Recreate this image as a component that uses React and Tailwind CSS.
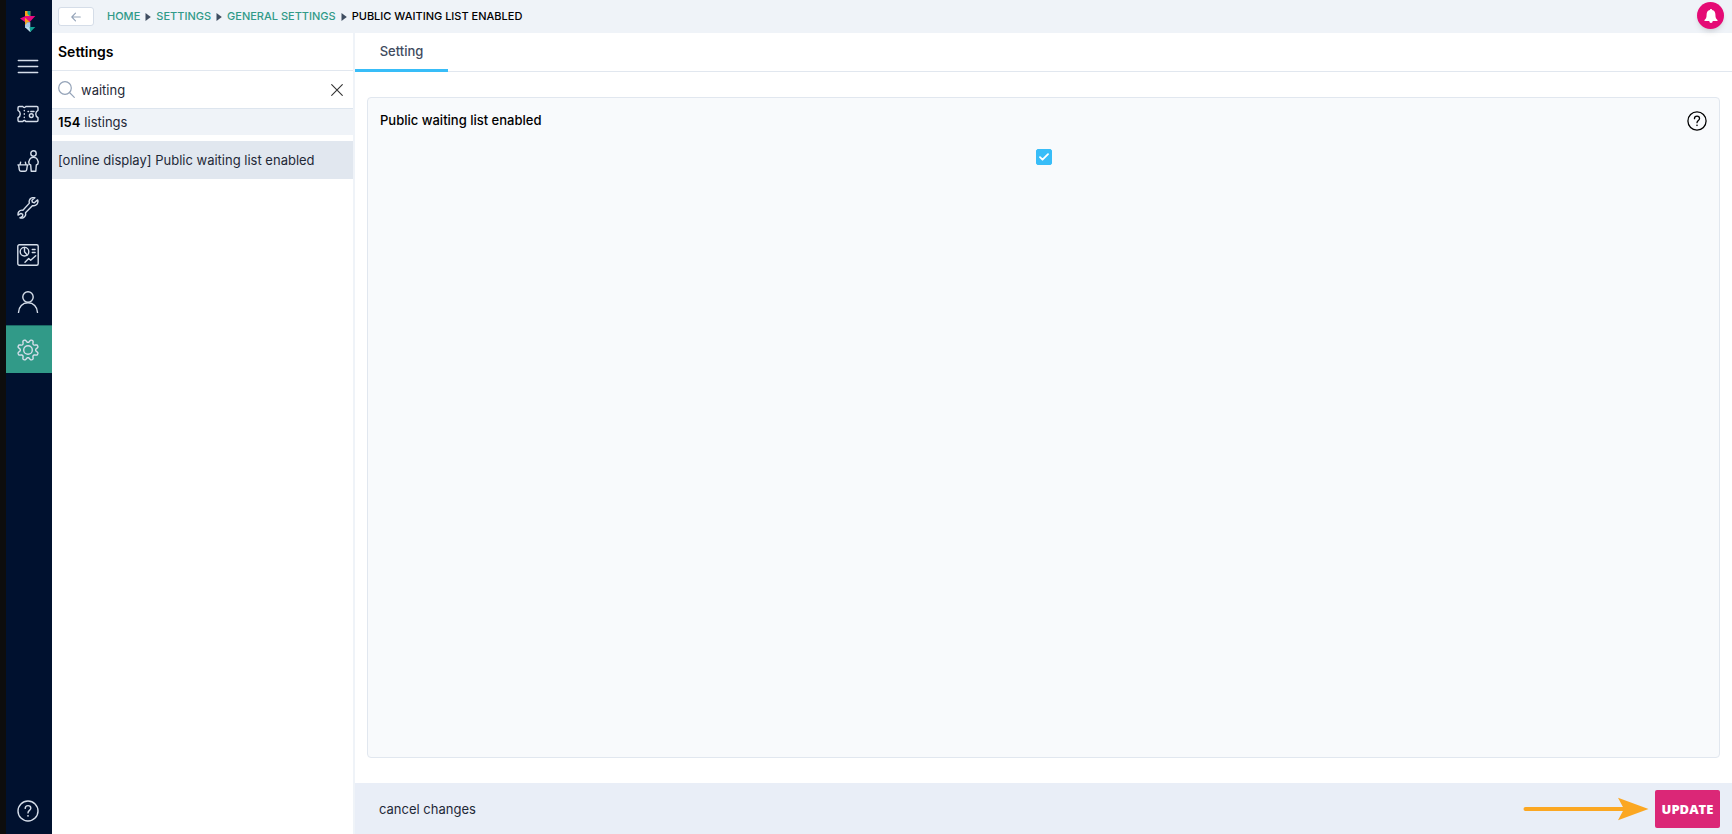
import { useState } from 'react'

const stroke = { fill: 'none', stroke: 'currentColor', strokeWidth: 1.4, strokeLinecap: 'round', strokeLinejoin: 'round' }

// Outline of an eight-toothed gear centred on (11, 11).
const gearOutline = Array.from({ length: 144 }, (_, i) => {
  const angle = (i / 144) * Math.PI * 2
  const radius = 9.1 - 1.5 * Math.tanh(1.7 * Math.cos(8 * angle))
  return `${(11 + radius * Math.cos(angle)).toFixed(2)},${(11 + radius * Math.sin(angle)).toFixed(2)}`
}).join(' ')

function Icon({ children }) {
  return (
    <svg viewBox="0 0 22 22" className="size-[22px]" aria-hidden="true" {...stroke}>
      {children}
    </svg>
  )
}

function Logo() {
  return (
    <svg viewBox="0 0 16 22" className="h-[22px] w-4" aria-hidden="true">
      <path d="M5 1h5.300v5.500H5z" fill="#f9a51a" />
      <path d="M10.300 1v5.500L7.500 4V1z" fill="#12a192" />
      <path d="M0 8.600L5.500 6H15.300L9.300 12.400 5 12z" fill="#e5097f" />
      <path d="M5 7.800l5.300 4.400H5z" fill="#f9a51a" />
      <path d="M5 12.200h5.300v5.300H5z" fill="#a9cbe8" />
      <path d="M5 12.200l2.800 0L5 15z" fill="#f9a51a" />
      <path d="M5 17h5.500v5z" fill="#d6ecf3" />
      <path d="M8 17h7.300l-5 5z" fill="#12a192" />
      <path d="M5 17h4.500l.8 5z" fill="#bfe0ee" />
    </svg>
  )
}

function HelpIcon({ className }) {
  return (
    <svg viewBox="0 0 22 22" className={className} aria-hidden="true" {...stroke}>
      <circle cx="11" cy="11" r="10" />
      <path d="M8.200 8.400C8.200 6.700 9.400 5.600 11 5.600s2.800 1.100 2.800 2.600c0 2.200-2.800 2.200-2.800 4.700" />
      <circle cx="11" cy="15.800" r=".9" fill="currentColor" stroke="none" />
    </svg>
  )
}

const navItems = [
  { label: 'Menu', icon: <path d="M1.300 4.500h19.400M1.300 10.500h19.400M1.300 16.500h19.400" /> },
  {
    label: 'Tickets',
    icon: (
      <>
        <path d="M2.200 3.500h3.700c.6 1.300 2.200 1.300 2.800 0H19.800c.6 0 1.200.5 1.200 1.200v2.600c-3 1.400-3 6 0 7.400v2.600c0 .7-.6 1.200-1.200 1.200H8.700c-.6-1.300-2.200-1.300-2.800 0H2.200c-.7 0-1.200-.5-1.200-1.200v-2.600c3-1.400 3-6 0-7.400V4.700c0-.7.5-1.200 1.200-1.200z" />
        <path d="M7.300 7.400v.4M7.300 10.800v.4M7.300 14.200v.4M11 8.500h.6M13.800 8.500h3.200" />
        <circle cx="14.300" cy="12.600" r="1.900" />
      </>
    ),
  },
  {
    label: 'Customers',
    icon: (
      <>
        <circle cx="16.500" cy="3.500" r="2.700" />
        <path d="M14.200 21.300l-.5-6.300c-2.200-.6-2.200-1.800-1.700-3.700.6-2.600 2.300-3.900 4.500-3.900s3.900 1.300 4.500 3.900c.5 1.900.5 3.100-1.700 3.700l-.5 6.300z" />
        <path d="M.9 14.900h10.200M1.600 15l.7 4.700c.1.900.7 1.500 1.600 1.500h4.200c.9 0 1.500-.6 1.600-1.500l.7-4.700M3 14.800l.6-2.500M9 14.800l-.6-2.500" />
      </>
    ),
  },
  {
    label: 'Maintenance',
    icon: (
      <path d="M20.600 2.900l-3.300 2.900-1.900-.6-.5-1.900 3-2.500c-2.200-.7-4.700.3-5.500 2.500-.4 1-.3 1.900 0 2.800L5.900 13.200c-1.500-.3-3.100.3-4.100 1.600-.8 1-.9 2.200-.7 3.300l2.900-1.700 1.700 1-.1 2-2.700 1.400c2.200.9 4.700-.1 5.500-2.200.4-1 .3-1.900.1-2.800l7.100-7.200c1.600.4 3.200-.2 4.300-1.400 1.100-1.300 1.300-2.900.7-4.300z" />
    ),
  },
  {
    label: 'Reports',
    icon: (
      <>
        <rect x=".8" y=".8" width="20.400" height="20.400" rx="1.500" />
        <circle cx="7.500" cy="7.700" r="4.300" />
        <path d="M7.500 3.400v4.300l2.600 3.200M15.300 5.500h2.800M15.300 8.500h2.800M8 18.200l3.700-3.600 2 1.600 5-4.400" />
      </>
    ),
  },
  {
    label: 'Users',
    icon: (
      <>
        <circle cx="11" cy="6" r="5.200" />
        <path d="M1.500 21.500c.3-5.800 4-9.700 9.500-9.700s9.200 3.900 9.500 9.700" />
      </>
    ),
  },
  {
    label: 'Settings',
    active: true,
    icon: (
      <>
        <circle cx="11" cy="11" r="4.300" />
        <polygon points={gearOutline} />
      </>
    ),
  },
]

function Sidebar() {
  return (
    <nav aria-label="Main" className="flex w-[52px] shrink-0 flex-col border-l-[6px] border-[#0d0d0d] bg-[#00112f] text-[#d5deea]">
      <a href="#home" aria-label="Home" className="flex h-[43px] items-start pt-2.5 pl-3.5">
        <Logo />
      </a>
      {navItems.map((item) => (
        <a
          key={item.label}
          href={`#${item.label.toLowerCase()}`}
          aria-label={item.label}
          className={
            item.active
              ? 'flex h-12 items-center border-t border-[#1c6b66] bg-[#319a88] pl-[11px]'
              : 'flex h-[47px] items-center pl-[11px]'
          }
        >
          <Icon>{item.icon}</Icon>
        </a>
      ))}
      <a href="#help" aria-label="Help" className="mt-auto flex h-[47px] items-center pl-[11px]">
        <HelpIcon className="size-[22px]" />
      </a>
    </nav>
  )
}

function Separator() {
  return (
    <svg viewBox="0 0 6 8" className="h-2 w-1.5 text-[#3f4d61]" aria-hidden="true">
      <path d="M.5 0L5.800 4 .5 8z" fill="currentColor" />
    </svg>
  )
}

function TopBar() {
  return (
    <header className="flex h-[33px] shrink-0 items-center bg-[#eff3f8] pr-2 pl-1.5">
      <button type="button" aria-label="Back" className="mr-[13px] flex h-[19px] w-9 items-center justify-center rounded-[3px] border border-[#d5dde8] bg-white text-[#94a3b8]">
        <svg viewBox="0 0 10 10" className="size-2.5" aria-hidden="true" {...stroke} strokeWidth="1.100">
          <path d="M9.300 5H.8M4.500 1.200L.8 5l3.700 3.800" />
        </svg>
      </button>
      <nav aria-label="Breadcrumb" className="flex items-center gap-[5px] text-[11px] font-medium text-[#319a88]">
        <a href="#home">HOME</a>
        <Separator />
        <a href="#settings">SETTINGS</a>
        <Separator />
        <a href="#general">GENERAL SETTINGS</a>
        <Separator />
        <span className="text-black">PUBLIC WAITING LIST ENABLED</span>
      </nav>
      <button type="button" aria-label="Notifications" className="mb-0.5 ml-auto flex size-[27px] items-center justify-center rounded-full bg-[#e50b75] text-white shadow-md">
        <svg viewBox="0 0 14 16" className="h-4 w-3.5" aria-hidden="true">
          <path d="M7 1c.7 0 1.100.4 1.100 1.100C10.300 2.600 11.400 4.400 11.400 6.600c0 2.900.6 4.300 2.100 5.400v.9H.5V12c1.500-1.100 2.100-2.500 2.100-5.400 0-2.200 1.100-4 3.300-4.500C5.900 1.400 6.300 1 7 1zM5.300 12.900h3.400c0 1.300-.7 2-1.700 2s-1.700-.7-1.700-2z" fill="currentColor" />
        </svg>
      </button>
    </header>
  )
}

function ListPanel() {
  const [query, setQuery] = useState('waiting')
  return (
    <aside className="w-[303px] shrink-0 border-r-2 border-[#eff3f8] text-[13px] text-[#1f2937]">
      <h1 className="flex h-[38px] items-center border-b border-[#e1e7ef] px-1.5 text-sm font-semibold text-black">Settings</h1>
      <div className="flex h-[38px] items-center gap-1.5 border-b border-[#dde5ee] px-1.5">
        <svg viewBox="0 0 17 17" className="size-[17px] shrink-0 text-[#94a3b8]" aria-hidden="true" {...stroke} strokeWidth="1.200">
          <circle cx="7" cy="7" r="6.300" />
          <path d="M11.500 11.500l4.800 4.800" />
        </svg>
        <input
          type="text"
          aria-label="Search settings"
          value={query}
          onChange={(e) => setQuery(e.target.value)}
          className="min-w-0 flex-1 bg-transparent pt-0.5 outline-none"
        />
        <button type="button" aria-label="Clear search" onClick={() => setQuery('')} className="mr-1 text-[#333]">
          <svg viewBox="0 0 12 12" className="size-3" aria-hidden="true" {...stroke} strokeWidth="1.100">
            <path d="M.7.7l10.600 10.600M11.300.7L.7 11.300" />
          </svg>
        </button>
      </div>
      <p className="mb-1.5 flex h-[26px] items-center gap-1 bg-[#eff3f8] px-1.5 pt-0.5">
        <strong className="font-semibold text-black">154</strong> listings
      </p>
      <a href="#public-waiting-list" className="flex h-[38px] items-center bg-[#e1e7ef] px-1.5 pt-0.5">
        [online display] Public waiting list enabled
      </a>
    </aside>
  )
}

function CheckBox() {
  const [checked, setChecked] = useState(true)
  return (
    <span className="grid size-4 place-items-center">
      <input
        id="waiting-enabled"
        type="checkbox"
        checked={checked}
        onChange={(e) => setChecked(e.target.checked)}
        className="peer col-start-1 row-start-1 size-4 appearance-none rounded-xs border border-[#38bdf8] bg-white checked:bg-[#38bdf8]"
      />
      <svg viewBox="0 0 10 8" className="pointer-events-none col-start-1 row-start-1 h-2 w-2.5 text-white opacity-0 peer-checked:opacity-100" aria-hidden="true" {...stroke} strokeWidth="1.800">
        <path d="M1 4.200l2.500 2.500L9 1.200" />
      </svg>
    </span>
  )
}

function Arrow() {
  return (
    <svg viewBox="0 0 126 24" className="h-6 w-[126px]" aria-hidden="true">
      <path d="M2.500 12H102" stroke="#fba722" strokeWidth="4" strokeLinecap="round" />
      <path d="M95 .8L125.500 12 95 23.200 101 12z" fill="#fba722" />
    </svg>
  )
}

export default function App() {
  return (
    <div className="flex min-h-screen bg-white font-['Inter','Liberation_Sans',sans-serif] text-[13px] text-[#1f2937]">
      <Sidebar />
      <div className="flex min-w-0 flex-1 flex-col">
        <TopBar />
        <div className="flex flex-1">
          <ListPanel />
          <main className="flex min-w-0 flex-1 flex-col">
            <div role="tablist" className="flex h-[39px] border-b border-[#e1e7ef]">
              <button type="button" role="tab" aria-selected="true" className="-mb-px w-[93px] border-b-[3px] border-[#38bdf8] pt-0.5 font-medium text-[#3f4b5e]">
                Setting
              </button>
            </div>
            <section className="mx-3 my-[25px] flex flex-1 flex-col rounded border border-[#e1e7ef] bg-[#f8fafc] px-3 pt-3">
              <div className="flex h-[22px] items-center justify-between text-black">
                <label htmlFor="waiting-enabled" className="font-medium">Public waiting list enabled</label>
                <button type="button" aria-label="Help">
                  <HelpIcon className="size-5" />
                </button>
              </div>
              <div className="mt-[17px] flex justify-center">
                <CheckBox />
              </div>
            </section>
            <footer className="flex h-[51px] items-center bg-[#e9eef7] pr-3 pl-6">
              <button type="button" className="pt-0.5">cancel changes</button>
              <div className="ml-auto flex items-center gap-1.5">
                <Arrow />
                <button type="button" className="h-[38px] w-[65px] rounded-xs bg-[#db2777] pt-0.5 font-['Open_Sans','Noto_Sans',sans-serif] text-[13px] font-extrabold text-white">
                  UPDATE
                </button>
              </div>
            </footer>
          </main>
        </div>
      </div>
    </div>
  )
}
